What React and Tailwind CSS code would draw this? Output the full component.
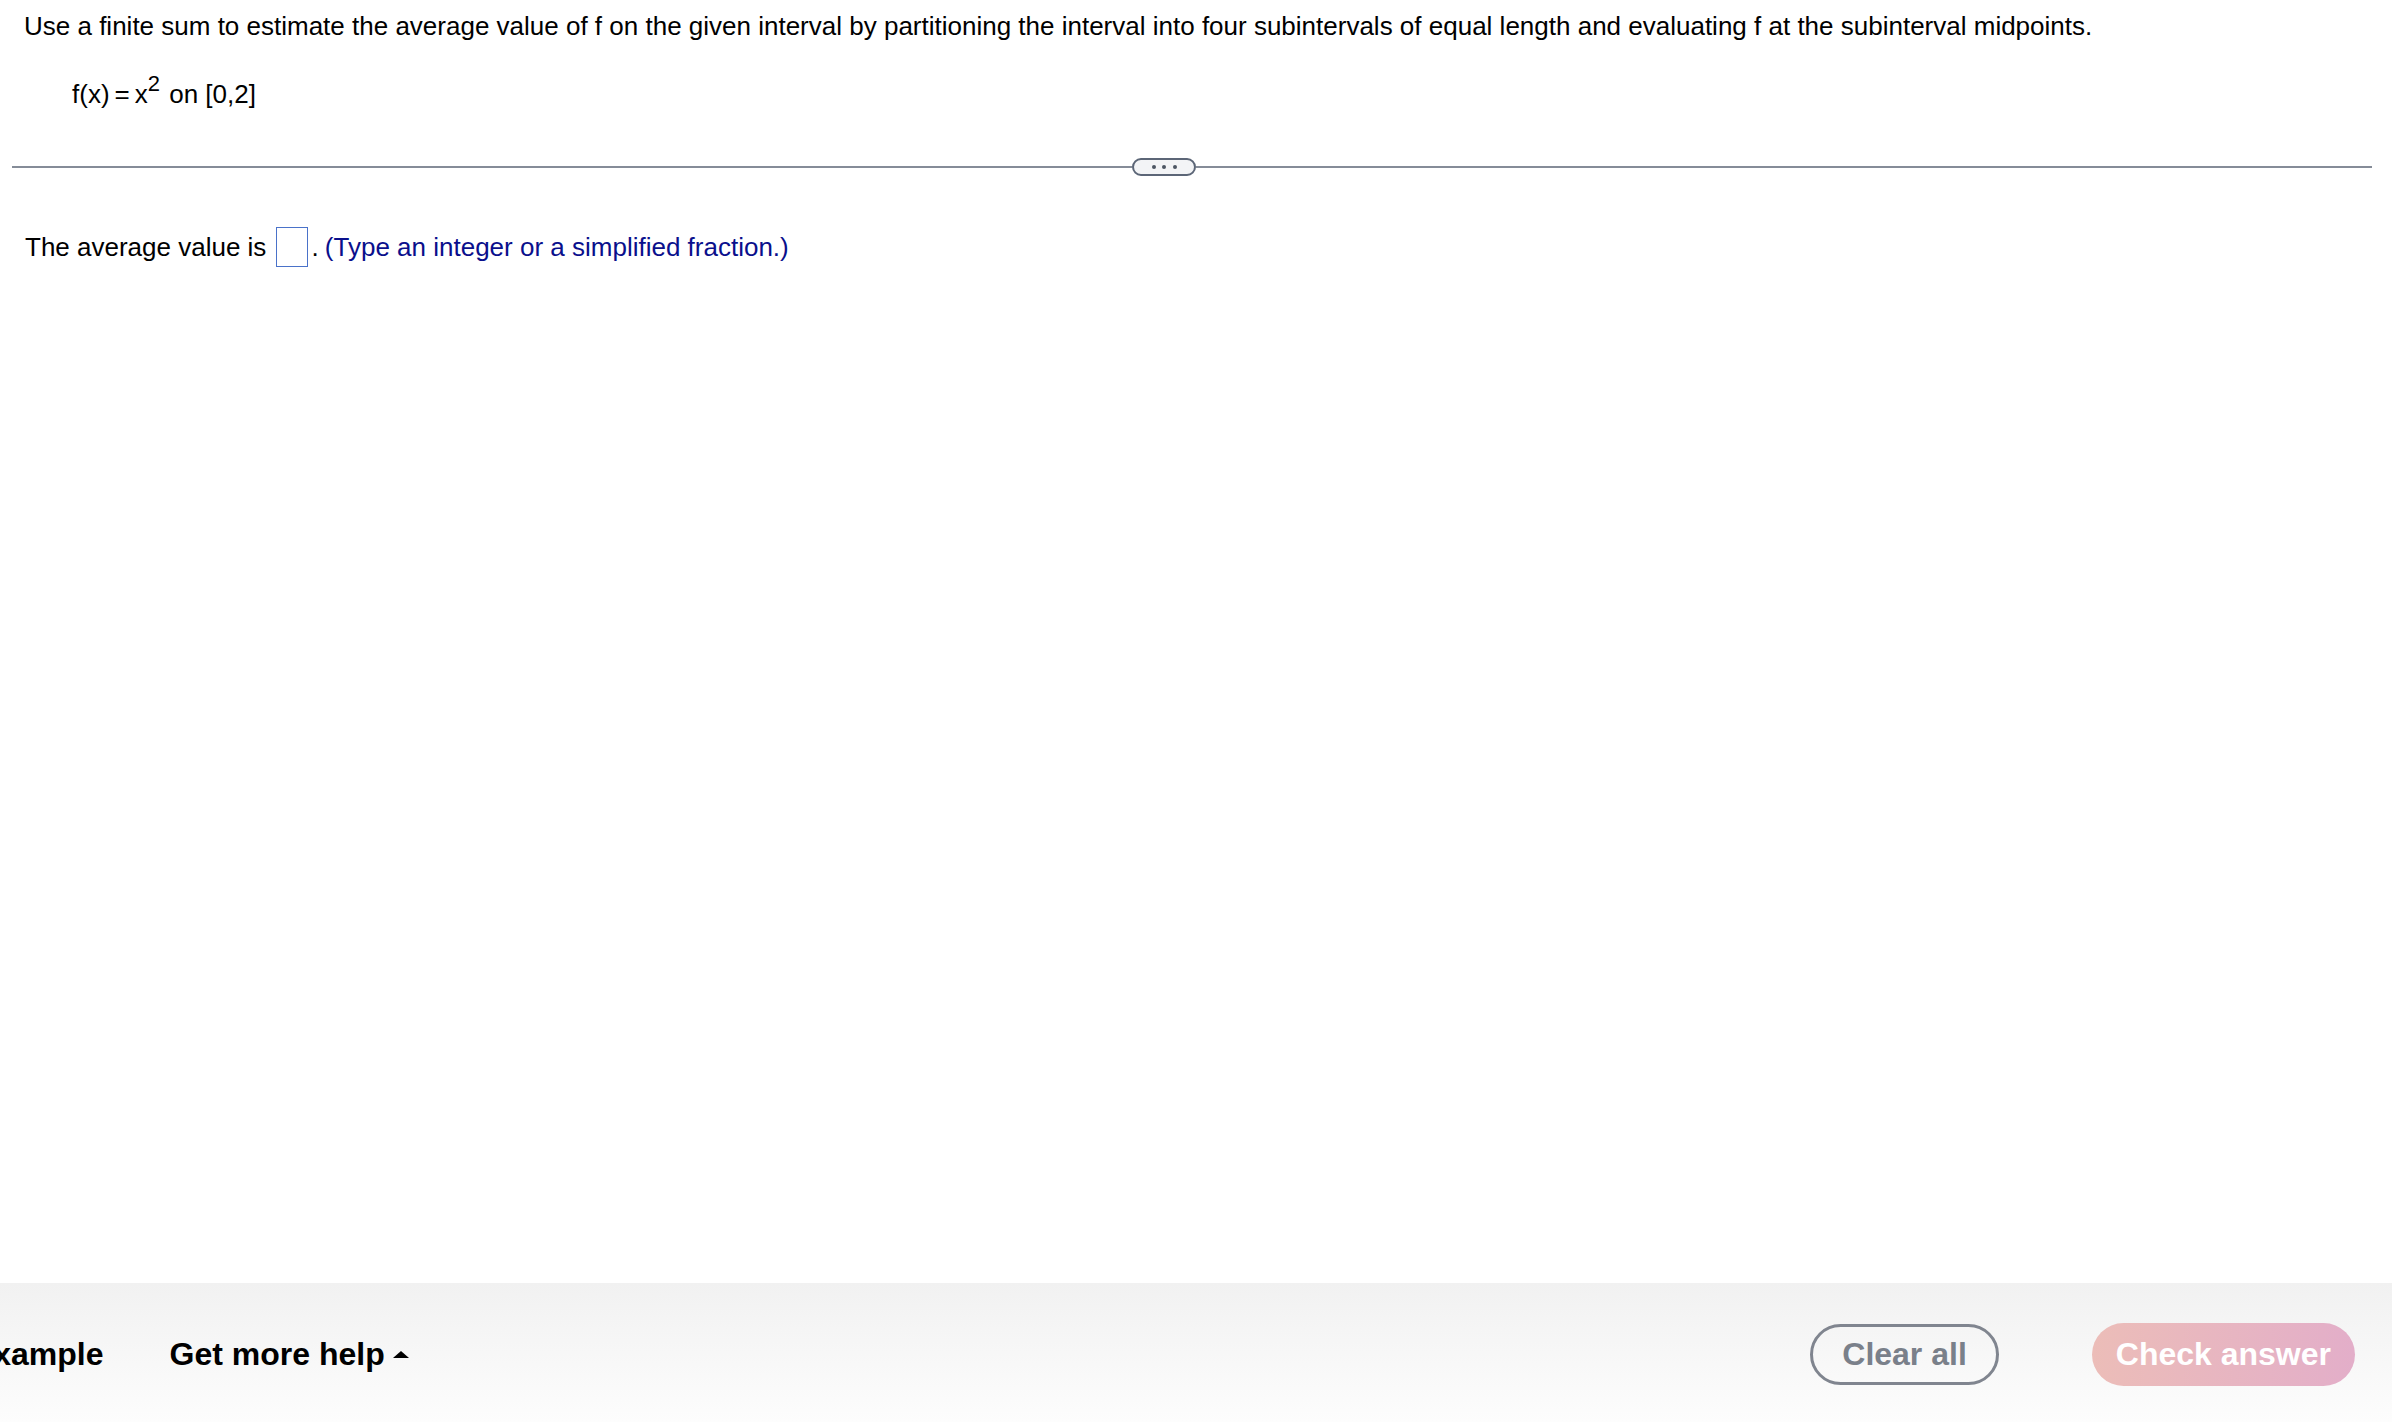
export default function App() {
  return (
    <div className="flex h-screen flex-col bg-white font-['Liberation_Sans',Arial,sans-serif] text-black">
      <div className="flex-1">
        <p className="pt-[11px] pl-[24px] text-[26px] leading-[30px]">
          Use a finite sum to estimate the average value of f on the given interval by partitioning the interval into four subintervals of equal length and evaluating f at the subinterval midpoints.
        </p>

        <p className="mt-[38px] pl-[72px] text-[26px] leading-[30px]">
          f(x)<span className="mx-[5px]">=</span>x
          <span className="relative -top-[12px] text-[22px] leading-none">2</span>
          <span className="ml-[2px]"> on [0,2]</span>
        </p>

        <div className="mt-[49px] flex items-center pr-[20px] pl-[12px]">
          <div className="h-[1.5px] w-[1120px] bg-[#858c98]" />
          <button className="flex h-[18px] w-[64px] items-center justify-center gap-[6.5px] rounded-full border-2 border-[#5c6677] bg-[#f3f4f6]">
            <span className="h-[4px] w-[4px] rounded-full bg-[#4d5563]" />
            <span className="h-[4px] w-[4px] rounded-full bg-[#4d5563]" />
            <span className="h-[4px] w-[4px] rounded-full bg-[#4d5563]" />
          </button>
          <div className="h-[1.5px] flex-1 bg-[#858c98]" />
        </div>

        <p className="mt-[53px] pl-[25px] text-[26px] leading-[30px]">
          The average value is
          <span className="relative -top-[2px] mx-[5px] ml-[10px] inline-block h-[40px] w-[32px] border-[1.5px] border-[#4a72c9] align-middle" />
          <span className="-ml-[2px]">.</span>{' '}
          <span className="-ml-[1px] text-[#0a0f8c]">(Type an integer or a simplified fraction.)</span>
        </p>
      </div>

      <div className="flex h-[139px] items-center overflow-hidden bg-gradient-to-b from-[#f1f1f1] to-[#fdfdfd] pt-[3px] text-[32px] font-bold">
        <span className="-ml-[152px] whitespace-nowrap">View an example</span>
        <button className="ml-[66px] flex items-center whitespace-nowrap">
          Get more help
          <span className="ml-[8px] h-0 w-0 border-x-[8px] border-b-[7px] border-x-transparent border-b-black" />
        </button>
        <div className="ml-auto flex items-center gap-[93px] pr-[37px]">
          <button className="h-[61px] rounded-full border-[3px] border-[#80858f] px-[29px] text-[#7a808a]">
            Clear all
          </button>
          <button className="h-[63px] rounded-full bg-gradient-to-r from-[#ecbdb8] to-[#e3aec9] px-[24px] text-white">
            Check answer
          </button>
        </div>
      </div>
    </div>
  )
}
